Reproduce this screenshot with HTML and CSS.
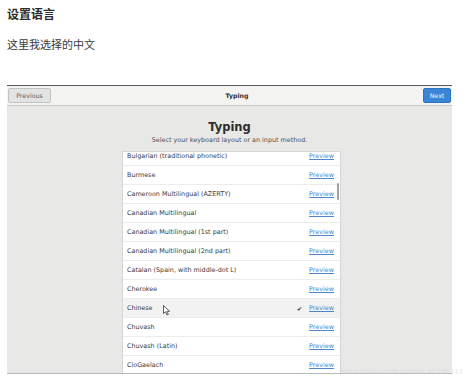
FILE: index.html
```html
<!DOCTYPE html>
<html>
<head>
<meta charset="utf-8">
<link rel="stylesheet" href="styles.css">
</head>
<body>
<div class="doc">
  <h1 class="title">设置语言</h1>
  <p class="note">这里我选择的中文</p>
  <div class="window">
    <div class="header">
      <button class="btn prev">Previous</button>
      <div class="htitle">Typing</div>
      <button class="btn next">Next</button>
    </div>
    <div class="main">
      <h2 class="heading">Typing</h2>
      <div class="sub">Select your keyboard layout or an input method.</div>
      <div class="list">
        <div class="rows">
          <div class="row"><span class="name">Bulgarian (traditional phonetic)</span><a class="pv">Preview</a></div>
          <div class="row"><span class="name">Burmese</span><a class="pv">Preview</a></div>
          <div class="row"><span class="name">Cameroon Multilingual (AZERTY)</span><a class="pv">Preview</a></div>
          <div class="row"><span class="name">Canadian Multilingual</span><a class="pv">Preview</a></div>
          <div class="row"><span class="name">Canadian Multilingual (1st part)</span><a class="pv">Preview</a></div>
          <div class="row"><span class="name">Canadian Multilingual (2nd part)</span><a class="pv">Preview</a></div>
          <div class="row"><span class="name">Catalan (Spain, with middle-dot L)</span><a class="pv">Preview</a></div>
          <div class="row"><span class="name">Cherokee</span><a class="pv">Preview</a></div>
          <div class="row sel"><span class="name">Chinese</span><span class="check">✔</span><a class="pv">Preview</a>
            <svg class="cursor" width="8" height="11" viewBox="0 0 8 11"><path d="M0.5 0.5 L0.5 8.5 L2.5 6.8 L4 10 L5.3 9.4 L3.9 6.3 L6.5 6.3 Z" fill="#fff" stroke="#333" stroke-width="0.8"/></svg>
          </div>
          <div class="row"><span class="name">Chuvash</span><a class="pv">Preview</a></div>
          <div class="row"><span class="name">Chuvash (Latin)</span><a class="pv">Preview</a></div>
          <div class="row"><span class="name">CloGaelach</span><a class="pv">Preview</a></div>
        </div>
        <div class="thumb"></div>
      </div>
    </div>
  </div>
  <div class="mark">https://blog.csdn.net/qq_41296347</div>
</div>
</body>
</html>
```
FILE: styles.css
```css
html, body {
  margin: 0;
  padding: 0;
  background: #ffffff;
}
.doc {
  position: relative;
  padding: 6px 0 0 7px;
}
.title {
  margin: 0;
  font-family: "Noto Sans CJK SC", sans-serif;
  font-size: 12px;
  line-height: 16px;
  font-weight: 700;
  color: #2b2b2b;
}
.note {
  margin: 14px 0 0 0;
  font-family: "Noto Sans CJK SC", sans-serif;
  font-size: 11px;
  line-height: 16px;
  color: #3a3a3a;
}
.window {
  margin-top: 33px;
  width: 445px;
  border-top: 1px solid #5c5c5c;
  border-bottom: 1px solid #b9b9b9;
  box-shadow: 0 4px 0 #dadada;
  font-family: "DejaVu Sans", sans-serif;
}
.header {
  height: 20px;
  background: #f3f3f2;
  border-bottom: 1px solid #c9c9c9;
  display: flex;
  align-items: center;
  justify-content: space-between;
  padding: 0 1px;
  box-sizing: border-box;
}
.btn {
  height: 15px;
  padding: 0;
  font-family: "DejaVu Sans", sans-serif;
  font-size: 6.3px;
  border-radius: 2px;
  display: flex;
  align-items: center;
  justify-content: center;
}
.prev {
  width: 43px;
  background: #e3e3e2;
  border: 1px solid #c2c2c2;
  color: #606060;
}
.next {
  width: 28px;
  background: #3a85d6;
  border: 1px solid #2f74c2;
  color: #e9f1fb;
}
.htitle {
  font-size: 6.2px;
  font-weight: 700;
  color: #2e2e2e;
}
.main {
  height: 267px;
  background: #e8e8e7;
  display: flex;
  flex-direction: column;
  align-items: center;
  overflow: hidden;
}
.heading {
  margin: 13px 0 0 0;
  font-size: 11.5px;
  line-height: 16px;
  font-weight: 700;
  color: #2e2e2e;
}
.sub {
  font-size: 6.4px;
  line-height: 11px;
  color: #505050;
}
.list {
  position: relative;
  margin-top: 5px;
  margin-left: 4px;
  width: 219px;
  flex: 1;
  background: #ffffff;
  border: 1px solid #d6d6d6;
  border-bottom: none;
  box-sizing: border-box;
  overflow: hidden;
}
.rows {
  margin-top: -5px;
}
.row {
  position: relative;
  height: 19px;
  box-sizing: border-box;
  border-bottom: 1px solid #ececec;
  display: flex;
  align-items: center;
  padding: 0 6px 0 4px;
  font-size: 6.4px;
  color: #3a3a3a;
}
.row.sel {
  background: #f2f2f2;
}
.name {
  flex: 1;
}
.check {
  font-size: 6px;
  color: #222;
  margin-right: 7px;
}
.pv {
  color: #4d86cf;
  text-decoration: underline;
  font-size: 6.4px;
}
.cursor {
  position: absolute;
  left: 40px;
  top: 6px;
}
.thumb {
  position: absolute;
  right: 1px;
  top: 31px;
  width: 2px;
  height: 17px;
  background: #a0a0a0;
  border-radius: 1px;
}
.mark {
  position: absolute;
  left: 340px;
  top: 368px;
  font-family: "DejaVu Sans", sans-serif;
  font-size: 7px;
  color: rgba(200, 200, 200, 0.45);
}
```
